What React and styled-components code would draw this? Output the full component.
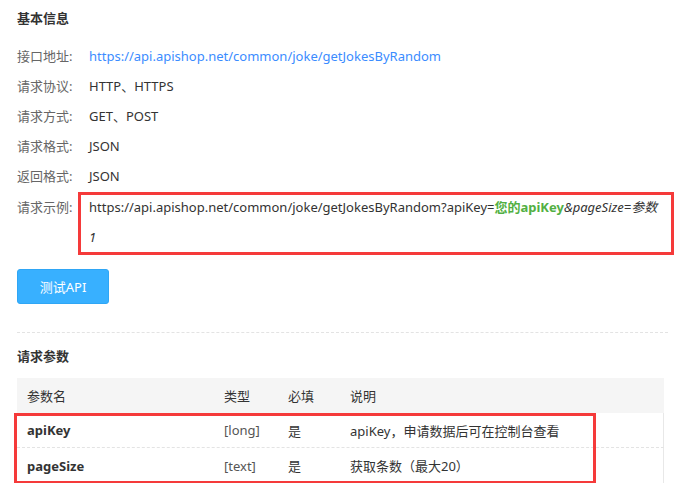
import React from 'react';
import styled, { createGlobalStyle } from 'styled-components';

const GlobalStyle = createGlobalStyle`
  html, body {
    margin: 0;
    padding: 0;
    background: #fff;
  }
  body {
    font-family: "Noto Sans", "Noto Sans CJK SC", sans-serif;
    font-size: 13px;
    color: #333;
  }
`;

const Page = styled.div`
  padding: 0 4px 0 17px;
  width: 678px;
  box-sizing: border-box;
`;

const SectionTitle = styled.div`
  font-weight: bold;
  line-height: ${(p) => p.$lh || 36}px;
  margin-top: ${(p) => p.$mt || 0}px;
  color: #333;
`;

const InfoList = styled.div`
  margin-top: 5px;
  display: grid;
  grid-template-columns: 72px 1fr;
`;

const Label = styled.div`
  line-height: 30px;
  color: #666;
  margin-top: ${(p) => (p.$boxed ? 1 : 0)}px;
`;

const Value = styled.div`
  line-height: 30px;
  color: ${(p) => (p.$link ? '#3b8cff' : '#333')};
  margin-top: ${(p) => (p.$boxed ? 1 : 0)}px;
`;

const ExampleBox = styled.div`
  margin-left: -11px;
  padding: 0 16px 3px 11px;
  line-height: 30px;
  color: #333;
  word-break: break-all;
  box-shadow: inset 0 0 0 3px #f53a3a;
`;

const Green = styled.b`
  color: #52b043;
`;

const Ital = styled.i``;

const TestButton = styled.button`
  margin-top: 14px;
  width: 92px;
  height: 35px;
  border: 1px solid #2fa6f5;
  border-radius: 3px;
  background: #38b0ff;
  color: #fff;
  font-family: inherit;
  font-size: 13px;
  display: block;
`;

const Divider = styled.div`
  margin-top: 28px;
  border-top: 1px dashed #e3e3e3;
  width: 651px;
`;

const Table = styled.div`
  width: 647px;
  margin-top: 7px;
`;

const Row = styled.div`
  display: grid;
  grid-template-columns: 197px 64px 62px 1fr;
  height: 35px;
  align-items: center;
  background: ${(p) => (p.$head ? '#f5f5f5' : '#fff')};
  border-right: ${(p) => (p.$head ? 'none' : '1px solid #e8e8e8')};
  border-bottom: ${(p) => (p.$dashed ? '1px dashed #e3e3e3' : 'none')};
  box-sizing: border-box;
`;

const Cell = styled.div`
  padding-left: 10px;
  color: ${(p) => p.$color || '#333'};
  font-weight: ${(p) => (p.$bold ? 'bold' : 'normal')};
  white-space: nowrap;
`;

const Body = styled.div`
  position: relative;
`;

const Highlight = styled.div`
  position: absolute;
  left: -3px;
  top: 0;
  width: 582px;
  height: 71px;
  box-sizing: border-box;
  border: 3px solid #f53a3a;
  pointer-events: none;
`;

const info = [
  ['接口地址:', 'https://api.apishop.net/common/joke/getJokesByRandom', true],
  ['请求协议:', 'HTTP、HTTPS'],
  ['请求方式:', 'GET、POST'],
  ['请求格式:', 'JSON'],
  ['返回格式:', 'JSON'],
];

const params = [
  ['apiKey', '[long]', '是', 'apiKey，申请数据后可在控制台查看'],
  ['pageSize', '[text]', '是', '获取条数（最大20）'],
];

export default function App() {
  return (
    <Page>
      <GlobalStyle />
      <SectionTitle>基本信息</SectionTitle>
      <InfoList>
        {info.map(([label, value, link]) => (
          <React.Fragment key={label}>
            <Label>{label}</Label>
            <Value $link={link}>{value}</Value>
          </React.Fragment>
        ))}
        <Label $boxed>请求示例:</Label>
        <Value $boxed>
          <ExampleBox>
            https://api.apishop.net/common/joke/getJokesByRandom?apiKey=<Green>您的apiKey</Green><Ital>&amp;pageSize=参数1</Ital>
          </ExampleBox>
        </Value>
      </InfoList>
      <TestButton>测试API</TestButton>
      <Divider />
      <SectionTitle $lh={30} $mt={8}>请求参数</SectionTitle>
      <Table>
        <Row $head>
          <Cell>参数名</Cell>
          <Cell>类型</Cell>
          <Cell>必填</Cell>
          <Cell>说明</Cell>
        </Row>
        <Body>
          {params.map(([name, type, req, desc], i) => (
            <Row key={name} $dashed={i === 0}>
              <Cell $bold>{name}</Cell>
              <Cell $color="#555">{type}</Cell>
              <Cell>{req}</Cell>
              <Cell>{desc}</Cell>
            </Row>
          ))}
          <Highlight />
        </Body>
      </Table>
    </Page>
  );
}
